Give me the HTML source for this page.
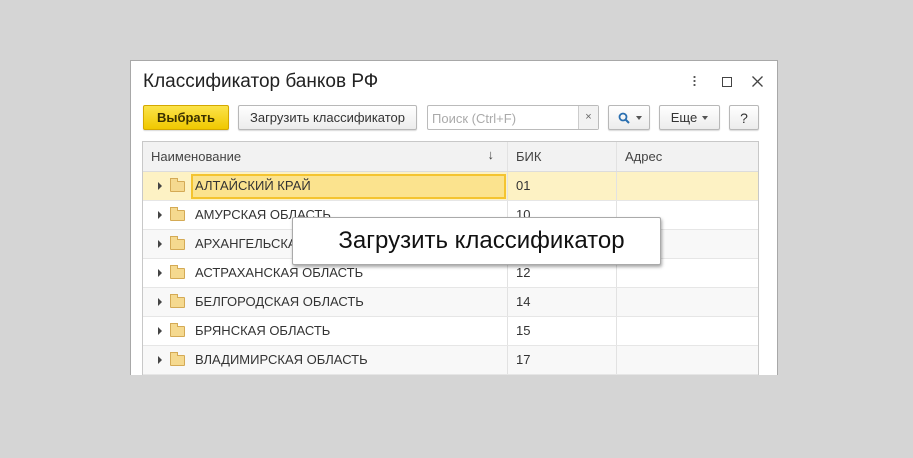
<!DOCTYPE html>
<html><head><meta charset="utf-8"><style>
*{box-sizing:border-box;margin:0;padding:0}
body{width:913px;height:458px;background:#d5d5d5;font-family:"Liberation Sans",Arial,sans-serif;position:relative;overflow:hidden}
.win{position:absolute;left:130px;top:60px;width:648px;height:315px;background:#fff;border:1px solid #a8a8a8;border-bottom:none;overflow:hidden}
.title{position:absolute;left:12px;top:10px;font-size:19px;color:#222}
.btn{position:absolute;top:44px;height:25px;border:1px solid #b8b8b8;border-radius:2px;background:linear-gradient(#fff,#ececec);font-size:13px;color:#333;display:flex;align-items:center;justify-content:center;box-shadow:0 1px 1px rgba(0,0,0,.15)}
.tbl{position:absolute;left:11px;top:80px;width:617px;height:240px;border:1px solid #c8c8c8;border-bottom:none}
.hdr{height:30px;background:#f2f2f2;border-bottom:1px solid #dcdcdc;position:relative;font-size:13px;color:#444}
.row{height:29px;border-bottom:1px solid #e6e6e6;position:relative;font-size:13px;color:#333}
.c1{position:absolute;left:0;width:363px;top:0;bottom:0}
.c2{position:absolute;left:364px;width:108px;top:0;bottom:0;border-left:1px solid #e2e2e2;padding:6px 0 0 8px}
.c3{position:absolute;left:473px;right:0;top:0;bottom:0;border-left:1px solid #e2e2e2}
.arr{position:absolute;left:15px;top:10px;width:0;height:0;border-left:4px solid #444;border-top:4px solid transparent;border-bottom:4px solid transparent}
.fold{position:absolute;left:27px;top:9px;width:15px;height:11px;background:#f5d98f;border:1px solid #d4aa55;border-radius:1px}
.fold:before{content:"";position:absolute;left:-1px;top:-4px;width:6px;height:3px;background:#f5d98f;border:1px solid #d4aa55;border-bottom:none}
.nm{position:absolute;left:52px;top:6px}
</style></head><body>
<div class="win">
<div class="title">Классификатор банков РФ</div>
<div style="position:absolute;left:562px;top:14px;width:3px;height:12px;background:radial-gradient(circle,#555 1px,transparent 1.2px) 0 0/3px 4px"></div>
<div style="position:absolute;left:591px;top:16px;width:10px;height:10px;border:1.5px solid #444"></div>
<svg style="position:absolute;left:621px;top:15px" width="11" height="11" viewBox="0 0 11 11"><path d="M0.5 0.5L10.5 10.5M10.5 0.5L0.5 10.5" stroke="#444" stroke-width="1.3"/></svg>
<div class="btn" style="left:12px;width:86px;background:linear-gradient(#fbe34a,#f0c800);border-color:#d4a800;font-weight:bold;color:#3a3000">Выбрать</div>
<div class="btn" style="left:107px;width:179px">Загрузить классификатор</div>
<div style="position:absolute;left:296px;top:44px;width:172px;height:25px;border:1px solid #bbb;border-radius:2px;font-size:13px;color:#aaa;padding:5px 0 0 4px">Поиск (Ctrl+F)
<div style="position:absolute;right:0;top:0;width:20px;height:23px;border-left:1px solid #ccc;background:#f2f2f2;color:#666;font-size:11px;text-align:center;line-height:22px">×</div></div>
<div class="btn" style="left:477px;width:42px;justify-content:flex-start;padding-left:9px">
<svg width="12" height="12" viewBox="0 0 12 12"><circle cx="5" cy="5" r="3.5" fill="none" stroke="#2a6fb0" stroke-width="1.8"/><path d="M7.5 7.5L11 11" stroke="#2a6fb0" stroke-width="2"/></svg>
<span style="margin-left:6px;border-top:4px solid #555;border-left:3px solid transparent;border-right:3px solid transparent"></span></div>
<div class="btn" style="left:528px;width:61px">Еще<span style="margin-left:5px;border-top:4px solid #555;border-left:3px solid transparent;border-right:3px solid transparent"></span></div>
<div class="btn" style="left:598px;width:30px;font-size:14px">?</div>
<div class="tbl">
<div class="hdr"><div class="c1"><span style="position:absolute;left:8px;top:7px">Наименование</span><span style="position:absolute;right:12px;top:5px">↓</span></div><div class="c2" style="padding-top:7px">БИК</div><div class="c3" style="padding:7px 0 0 8px">Адрес</div></div>
<div class="row" style="background:#fdf2c4"><div class="c1"><div class="arr"></div><div class="fold"></div><div style="position:absolute;left:48px;top:2px;width:315px;height:25px;background:#fbe38e;border:2px solid #f4c430"></div><span class="nm">АЛТАЙСКИЙ КРАЙ</span></div><div class="c2">01</div><div class="c3"></div></div>
<div class="row"><div class="c1"><div class="arr"></div><div class="fold"></div><span class="nm">АМУРСКАЯ ОБЛАСТЬ</span></div><div class="c2">10</div><div class="c3"></div></div>
<div class="row" style="background:#f8f8f8"><div class="c1"><div class="arr"></div><div class="fold"></div><span class="nm">АРХАНГЕЛЬСКАЯ ОБЛАСТЬ</span></div><div class="c2">11</div><div class="c3"></div></div>
<div class="row"><div class="c1"><div class="arr"></div><div class="fold"></div><span class="nm">АСТРАХАНСКАЯ ОБЛАСТЬ</span></div><div class="c2">12</div><div class="c3"></div></div>
<div class="row" style="background:#f8f8f8"><div class="c1"><div class="arr"></div><div class="fold"></div><span class="nm">БЕЛГОРОДСКАЯ ОБЛАСТЬ</span></div><div class="c2">14</div><div class="c3"></div></div>
<div class="row"><div class="c1"><div class="arr"></div><div class="fold"></div><span class="nm">БРЯНСКАЯ ОБЛАСТЬ</span></div><div class="c2">15</div><div class="c3"></div></div>
<div class="row" style="background:#f8f8f8"><div class="c1"><div class="arr"></div><div class="fold"></div><span class="nm">ВЛАДИМИРСКАЯ ОБЛАСТЬ</span></div><div class="c2">17</div><div class="c3"></div></div>
</div>
</div>
<div style="position:absolute;left:292px;top:217px;width:369px;height:48px;background:#fff;border:1px solid #aaa;border-radius:2px;box-shadow:1px 2px 3px rgba(0,0,0,.35);font-size:24px;color:#111;text-align:center;line-height:46px;padding-left:10px">Загрузить классификатор</div>
</body></html>
